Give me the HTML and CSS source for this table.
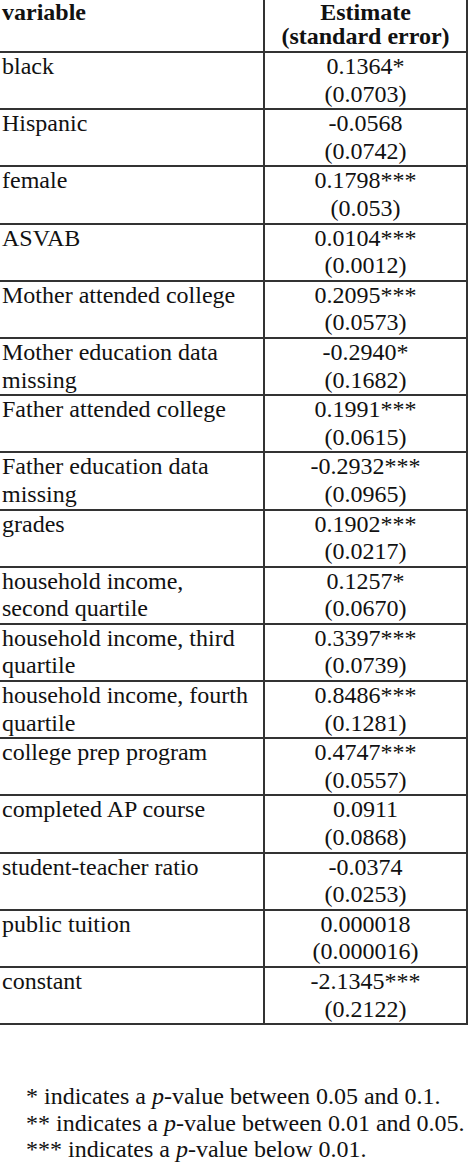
FILE: index.html
```html
<!DOCTYPE html>
<html lang="en">
<head>
<meta charset="utf-8">
<title>Estimates</title>
<link rel="stylesheet" href="styles.css">
</head>
<body>
<main class="page">
  <table class="results">
    <colgroup>
      <col class="col-var">
      <col class="col-est">
    </colgroup>
    <thead>
      <tr>
        <th class="var">variable</th>
        <th class="est">Estimate<br>(standard error)</th>
      </tr>
    </thead>
    <tbody>
      <tr><td class="var">black</td><td class="est">0.1364*<br>(0.0703)</td></tr>
      <tr><td class="var">Hispanic</td><td class="est">-0.0568<br>(0.0742)</td></tr>
      <tr><td class="var">female</td><td class="est">0.1798***<br>(0.053)</td></tr>
      <tr><td class="var">ASVAB</td><td class="est">0.0104***<br>(0.0012)</td></tr>
      <tr><td class="var">Mother attended college</td><td class="est">0.2095***<br>(0.0573)</td></tr>
      <tr><td class="var">Mother education data missing</td><td class="est">-0.2940*<br>(0.1682)</td></tr>
      <tr><td class="var">Father attended college</td><td class="est">0.1991***<br>(0.0615)</td></tr>
      <tr><td class="var">Father education data missing</td><td class="est">-0.2932***<br>(0.0965)</td></tr>
      <tr><td class="var">grades</td><td class="est">0.1902***<br>(0.0217)</td></tr>
      <tr><td class="var">household income, second quartile</td><td class="est">0.1257*<br>(0.0670)</td></tr>
      <tr><td class="var">household income, third quartile</td><td class="est">0.3397***<br>(0.0739)</td></tr>
      <tr><td class="var">household income, fourth quartile</td><td class="est">0.8486***<br>(0.1281)</td></tr>
      <tr><td class="var">college prep program</td><td class="est">0.4747***<br>(0.0557)</td></tr>
      <tr><td class="var">completed AP course</td><td class="est">0.0911<br>(0.0868)</td></tr>
      <tr><td class="var">student-teacher ratio</td><td class="est">-0.0374<br>(0.0253)</td></tr>
      <tr><td class="var">public tuition</td><td class="est">0.000018<br>(0.000016)</td></tr>
      <tr><td class="var">constant</td><td class="est">-2.1345***<br>(0.2122)</td></tr>
    </tbody>
  </table>
  <div class="notes">
    <p>* indicates a <i>p</i>-value between 0.05 and 0.1.</p>
    <p>** indicates a <i>p</i>-value between 0.01 and 0.05.</p>
    <p>*** indicates a <i>p</i>-value below 0.01.</p>
  </div>
</main>
</body>
</html>
```

FILE: styles.css
```css
html, body {
  margin: 0;
  padding: 0;
  background: #ffffff;
}

body {
  font-family: "Liberation Serif", "Times New Roman", serif;
  font-size: 24px;
  color: #111111;
  overflow: hidden;
}

.page {
  width: 474px;
}

.results {
  border-collapse: collapse;
  table-layout: fixed;
  width: 467px;
}

.col-var {
  width: 264px;
}

.col-est {
  width: 203px;
}

.results th,
.results td {
  padding: 0;
  line-height: 27.6px;
  vertical-align: top;
  border-top: 2px solid #333333;
  border-bottom: 2px solid #333333;
}

.results thead th {
  border-top: none;
  font-weight: bold;
  line-height: 24px;
  padding-bottom: 3px;
}

.results .var {
  text-align: left;
  padding-left: 2px;
  padding-right: 12px;
}

.results .est {
  text-align: center;
  border-left: 2px solid #333333;
  border-right: 2px solid #333333;
}

.notes {
  margin-top: 58px;
  padding-left: 26px;
  white-space: nowrap;
}

.notes p {
  margin: 0;
  line-height: 26.5px;
}
```
